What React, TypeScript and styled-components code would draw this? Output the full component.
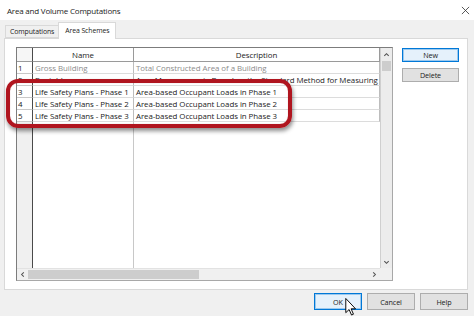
import { FC } from 'react';
import styled, { createGlobalStyle } from 'styled-components';

const uiFont = `"Open Sans", "Noto Sans", "Liberation Sans", sans-serif`;
const textColor = '#1b1b1b';
const mutedText = '#8c8c8c';
const buttonFace = '#e1e1e1';
const buttonBorder = '#adadad';
const accentBlue = '#0078d7';

const GlobalStyle = createGlobalStyle`
	html, body {
		margin: 0;
		padding: 0;
	}
	body {
		width: 474px;
		height: 316px;
		overflow: hidden;
		background: #f0f0f0;
		font-family: ${uiFont};
		color: ${textColor};
	}
`;

const Window = styled.div`
	width: 474px;
	height: 316px;
	display: flex;
	flex-direction: column;
	position: relative;
	background: #f0f0f0;
	box-sizing: border-box;
`;

const TitleBar = styled.div`
	height: 20px;
	flex-shrink: 0;
	background: #ffffff;
	display: flex;
	align-items: center;
	justify-content: space-between;
	padding: 0 4px 0 7px;
	font-size: 8px;
	letter-spacing: -0.2px;
	color: ${textColor};
`;

const CloseGlyph = styled.svg`
	width: 9px;
	height: 9px;
`;

const Body = styled.div`
	flex: 1;
	display: flex;
	flex-direction: column;
	padding: 2px 6px 0 4px;
`;

const TabStrip = styled.div`
	height: 16px;
	display: flex;
	align-items: flex-end;
	padding-left: 1px;
`;

const Tab = styled.div<{ $active?: boolean }>`
	box-sizing: border-box;
	height: ${(p) => (p.$active ? '17px' : '13px')};
	margin-bottom: ${(p) => (p.$active ? '-1px' : '0')};
	position: relative;
	z-index: ${(p) => (p.$active ? 2 : 1)};
	padding: ${(p) => (p.$active ? '0 6px 2px' : '0 4px')};
	display: flex;
	align-items: center;
	font-size: 6.9px;
	letter-spacing: -0.1px;
	background: ${(p) => (p.$active ? '#ffffff' : '#f0f0f0')};
	border: 1px solid #d9d9d9;
	border-bottom: ${(p) => (p.$active ? 'none' : '1px solid #d9d9d9')};
	margin-left: ${(p) => (p.$active ? '-1px' : '0')};
`;

const Panel = styled.div`
	box-sizing: border-box;
	height: 252px;
	background: #ffffff;
	border: 1px solid #d9d9d9;
	display: flex;
	padding: 8px 0 0 11px;
`;

const Table = styled.div`
	box-sizing: border-box;
	width: 377px;
	height: 234px;
	border: 1px solid #a8a8a8;
	border-left-color: #7c7c7c;
	border-top-color: #7c7c7c;
	display: grid;
	grid-template-columns: 1fr 12px;
	grid-template-rows: 1fr 12px;
	font-size: 7.9px;
	letter-spacing: -0.05px;
`;

const GridArea = styled.div`
	display: flex;
	flex-direction: column;
	overflow: hidden;
	min-width: 0;
`;

const Row = styled.div<{ $height: number }>`
	display: grid;
	grid-template-columns: 16px 101px 1fr;
	height: ${(p) => p.$height}px;
	flex-shrink: 0;
`;

const FillRow = styled(Row)`
	flex: 1;
`;

const Cell = styled.div<{ $muted?: boolean }>`
	box-sizing: border-box;
	display: flex;
	align-items: center;
	padding-left: 2px;
	white-space: nowrap;
	overflow: hidden;
	color: ${(p) => (p.$muted ? mutedText : textColor)};
	border-bottom: 1px solid #dcdcdc;
	border-right: 1px solid #bdbdbd;
`;

const NumberCell = styled(Cell)`
	padding-left: 1px;
	border-right: 1px solid #4a4a4a;
	border-bottom: 1px solid #c8c8c8;
`;

const HeaderCell = styled(Cell)`
	justify-content: center;
	padding-left: 0;
	border-bottom: 1px solid #9a9a9a;
	border-right: 1px solid #9a9a9a;
`;

const CornerCell = styled(HeaderCell)`
	background: #f6f6f6;
	border-right: 1px solid #4a4a4a;
`;

const EmptyCell = styled.div<{ $gray?: boolean; $edge?: string }>`
	background: ${(p) => (p.$gray ? '#f0f0f0' : '#ffffff')};
	border-right: 1px solid ${(p) => p.$edge || '#c8c8c8'};
`;

const VScroll = styled.div`
	display: flex;
	flex-direction: column;
	background: #ececec;
	border-left: 1px solid #cfcfcf;
`;

const HScroll = styled.div`
	display: flex;
	background: #f0f0f0;
	border-top: 1px solid #e2e2e2;
	align-items: stretch;
`;

const ArrowBox = styled.div<{ $size: number }>`
	flex: 0 0 ${(p) => p.$size}px;
	display: flex;
	align-items: center;
	justify-content: center;
`;

const Thumb = styled.div<{ $length: number; $vertical?: boolean }>`
	flex: 0 0 ${(p) => p.$length}px;
	background: #cdcdcd;
	margin: ${(p) => (p.$vertical ? '0 1px' : '1px 0')};
`;

const Track = styled.div`
	flex: 1;
`;

const ScrollCorner = styled.div`
	background: #f0f0f0;
`;

const SideButtons = styled.div`
	display: flex;
	flex-direction: column;
	gap: 6px;
	margin: 1px 0 0 9px;
`;

const Button = styled.button<{ $default?: boolean; $w: number; $h: number }>`
	box-sizing: border-box;
	width: ${(p) => p.$w}px;
	height: ${(p) => p.$h}px;
	padding: 0;
	font-family: ${uiFont};
	font-size: 7.2px;
	letter-spacing: -0.1px;
	color: ${textColor};
	background: ${(p) => (p.$default ? '#e5f1fb' : buttonFace)};
	border: 1px solid ${(p) => (p.$default ? accentBlue : buttonBorder)};
	box-shadow: ${(p) => (p.$default ? `inset 0 0 0 1px #9cc9ee` : 'none')};
`;

const Footer = styled.div`
	display: flex;
	justify-content: flex-end;
	gap: 5px;
	padding-top: 3px;
`;

const Highlight = styled.div`
	position: absolute;
	left: 6px;
	top: 79px;
	width: 286px;
	height: 49px;
	box-sizing: border-box;
	border: 4px solid #b0151f;
	border-radius: 12px;
	box-shadow: 1px 3px 4px rgba(0, 0, 0, 0.45), inset 0 0 1px rgba(120, 0, 0, 0.4);
	pointer-events: none;
`;

const Cursor = styled.svg`
	position: absolute;
	left: 345px;
	top: 298px;
	width: 12px;
	height: 18px;
`;

const Chevron: FC<{ dir: 'up' | 'down' | 'left' | 'right' }> = ({ dir }) => {
	const rot = { up: 0, right: 90, down: 180, left: 270 }[dir];
	return (
		<svg width="7" height="7" viewBox="0 0 8 8">
			<path d="M1.5 5.5 L4 3 L6.5 5.5" fill="none" stroke="#505050" strokeWidth="1.2" transform={`rotate(${rot} 4 4)`} />
		</svg>
	);
};

const rows = [
	{ n: '1', name: 'Gross Building', desc: 'Total Constructed Area of a Building', muted: true },
	{ n: '2', name: 'Rentable', desc: 'Area Measurements Based on the Standard Method for Measuring Flo' },
	{ n: '3', name: 'Life Safety Plans - Phase 1', desc: 'Area-based Occupant Loads in Phase 1' },
	{ n: '4', name: 'Life Safety Plans - Phase 2', desc: 'Area-based Occupant Loads in Phase 2' },
	{ n: '5', name: 'Life Safety Plans - Phase 3', desc: 'Area-based Occupant Loads in Phase 3' },
];

const App: FC = () => {
	return (
		<Window>
			<GlobalStyle />
			<TitleBar>
				<span>Area and Volume Computations</span>
				<CloseGlyph viewBox="0 0 10 10">
					<path d="M1 1 L9 9 M9 1 L1 9" stroke="#333" strokeWidth="0.9" />
				</CloseGlyph>
			</TitleBar>
			<Body>
				<TabStrip>
					<Tab>Computations</Tab>
					<Tab $active>Area Schemes</Tab>
				</TabStrip>
				<Panel>
					<Table>
						<GridArea>
							<Row $height={14}>
								<CornerCell />
								<HeaderCell>Name</HeaderCell>
								<HeaderCell>Description</HeaderCell>
							</Row>
							{rows.map((r) => (
								<Row $height={12} key={r.n}>
									<NumberCell>{r.n}</NumberCell>
									<Cell $muted={r.muted}>{r.name}</Cell>
									<Cell $muted={r.muted}>{r.desc}</Cell>
								</Row>
							))}
							<FillRow $height={0}>
								<EmptyCell $gray $edge="#4a4a4a" />
								<EmptyCell />
								<EmptyCell $edge="transparent" />
							</FillRow>
						</GridArea>
						<VScroll>
							<ArrowBox $size={13}>
								<Chevron dir="up" />
							</ArrowBox>
							<Thumb $length={10} $vertical />
							<Track />
							<ArrowBox $size={12}>
								<Chevron dir="down" />
							</ArrowBox>
						</VScroll>
						<HScroll>
							<ArrowBox $size={11}>
								<Chevron dir="left" />
							</ArrowBox>
							<Thumb $length={171} />
							<Track />
							<ArrowBox $size={12}>
								<Chevron dir="right" />
							</ArrowBox>
						</HScroll>
						<ScrollCorner />
					</Table>
					<SideButtons>
						<Button $default $w={57} $h={14}>
							New
						</Button>
						<Button $w={57} $h={14}>
							Delete
						</Button>
					</SideButtons>
				</Panel>
				<Footer>
					<Button $default $w={48} $h={17}>
						OK
					</Button>
					<Button $w={48} $h={17}>
						Cancel
					</Button>
					<Button $w={48} $h={17}>
						Help
					</Button>
				</Footer>
			</Body>
			<Highlight />
			<Cursor viewBox="0 0 12 19">
				<path d="M0.5 0.5 L0.5 15.5 L4 12.2 L6.6 18 L8.6 17.1 L6.1 11.4 L10.8 11.4 Z" fill="#ffffff" stroke="#000000" strokeWidth="1" strokeLinejoin="round" />
			</Cursor>
		</Window>
	);
};

export default App;
